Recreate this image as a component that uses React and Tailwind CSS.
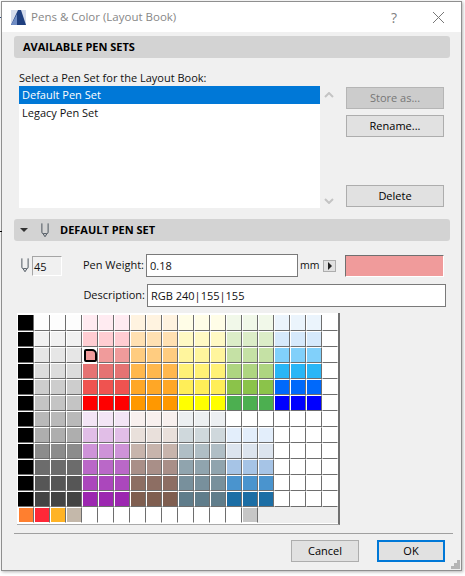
import React from 'react';

const ui = { fontFamily: '"Open Sans", "Noto Sans", sans-serif' };

// one colour per group: black, gray, pink, orange, yellow, green, blue, white
const groups = [
  ['#000000', '#fdfdfd', '#ffebf1', '#fff3e0', '#fffde7', '#f1f8e9', '#ebf4fc', '#ffffff'],
  ['#000000', '#f1f1f1', '#ffcdd2', '#ffe0b2', '#fff9c4', '#dcedc8', '#d6e9fb', '#ffffff'],
  ['#000000', '#e6e6e6', '#f09b9b', '#ffcc80', '#fff59d', '#c5e1a5', '#81d0fa', '#ffffff'],
  ['#000000', '#dcdcdc', '#e57373', '#ffb74d', '#fff176', '#aed581', '#29b6f6', '#ffffff'],
  ['#000000', '#cdcdcd', '#ef5350', '#ffa726', '#ffee58', '#8bc34a', '#0069fb', '#ffffff'],
  ['#000000', '#c4c4c4', '#ff0000', '#ff9800', '#ffff00', '#4caf50', '#0000ff', '#ffffff'],
  ['#000000', '#b9b9b9', '#f3e5f5', '#f8f0ee', '#eceff1', '#ffffff', '#ffffff', '#ffffff'],
  ['#000000', '#aeaeae', '#e1bee7', '#e9e0db', '#cfd8dc', '#e3eefb', '#ffffff', '#ffffff'],
  ['#000000', '#8c8c8c', '#ce93d8', '#c7b4ac', '#b0bec5', '#dce4ee', '#ffffff', '#ffffff'],
  ['#000000', '#6c6c6c', '#ba68c8', '#a98f88', '#90a4ae', '#a6c4e6', '#ffffff', '#ffffff'],
  ['#000000', '#565656', '#ab47bc', '#8d6e63', '#78909c', '#4a94ce', '#ffffff', '#ffffff'],
  ['#000000', '#444444', '#9c27b0', '#7f5e50', '#607d8b', '#1c6ea5', '#ffffff', '#ffffff'],
];
const spans = [1, 3, 3, 3, 3, 3, 3, 1];
const rows = groups.map(g => g.flatMap((c, i) => Array(spans[i]).fill(c)));
const lastRow = ['#ff7f2f', '#ff2837', '#ffb325', '#c4b8aa', ...Array(10).fill('#ffffff'), '#c6c6c6'];

const PenIcon = ({ className }) => (
  <svg viewBox="0 0 9 16" className={className} fill="none" stroke="#3c4650" strokeWidth="1">
    <path d="M1 0v10q0 1.5 1.5 1.5h4q1.5 0 1.5-1.5V0" />
    <path d="M2.5 12l2 3 2-3" />
  </svg>
);

const Btn = ({ children, className = '' }) => (
  <div className={`flex items-center justify-center w-[98px] h-[22px] border border-[#adadad] bg-[#e1e1e1] text-black text-[11px] ${className}`}>
    {children}
  </div>
);

const Bar = ({ children }) => (
  <div className="flex items-center h-[22px] ml-3 w-[436px] rounded-[3px] bg-[#d3d3d3] text-[11px] font-bold text-black">
    {children}
  </div>
);

const Cell = ({ color, selected, firstLine, lastLine, firstCol, lastCol }) => (
  <div className={`w-4 h-4 bg-white border border-l-white border-t-white ${firstLine ? 'border-t-0' : ''} ${firstCol ? 'border-l-0' : ''} ${lastCol ? 'border-r-white' : 'border-r-[#6e6e6e]'} ${lastLine ? 'border-b-white' : 'border-b-[#6e6e6e]'}`}>
    <div className="w-full h-full" style={{ background: selected ? '#ffffff' : color }}>
      {selected && <div className="ml-px mt-px w-[13px] h-[13px] border-2 border-black rounded-[2px] rounded-tr-[5px] bg-[#f09b9b]" />}
    </div>
  </div>
);

export default function App() {
  return (
    <div className="relative w-[465px] h-[576px] bg-white overflow-hidden text-[#111]" style={ui}>
      <div className="absolute left-0 top-[17px] w-px h-px bg-[#2a4a80]" />
      <div className="absolute left-0 top-[231px] w-[2px] h-px bg-black" />
      <div className="ml-px mt-px w-[461px] h-[570px] border border-[#8f8f8f] bg-[#f0f0f0] shadow-[1px_1px_3px_rgba(0,0,0,0.3)]">
        <div className="flex items-center h-[30px] bg-white">
          <svg viewBox="0 0 15 15" className="ml-[9px] w-[15px] h-[15px]">
            <rect width="15" height="15" fill="#d5dcec" />
            <path d="M0 15L7 0h3l5 15z" fill="#1f3f7f" />
            <path d="M0 15L6 4v11z" fill="#6f8cc4" />
          </svg>
          <span className="ml-[5px] text-[11.5px] text-[#878787]">Pens &amp; Color (Layout Book)</span>
          <span className="ml-auto text-[14px] text-[#808080]">?</span>
          <svg viewBox="0 0 11 11" className="ml-[36px] mr-[17px] w-[11px] h-[11px]" stroke="#777" fill="none">
            <path d="M0 0l11 11M11 0L0 11" />
          </svg>
        </div>

        <div className="pt-1">
          <Bar><span className="ml-[9px]">AVAILABLE PEN SETS</span></Bar>

          <div className="ml-[17px] mt-[11px] h-[17px] text-[11px] leading-[17px]">Select a Pen Set for the Layout Book:</div>
          <div className="flex ml-[17px]">
            <div className="w-[301px] h-[122px] bg-white text-[11px] leading-[18px]">
              <div className="h-[18px] pl-[3px] bg-[#0078d7] text-white">Default Pen Set</div>
              <div className="h-[18px] pl-[3px]">Legacy Pen Set</div>
            </div>
            <div className="flex flex-col justify-between w-[26px] h-[122px] pt-[6px] pb-[4px] pl-[4px]">
              <svg viewBox="0 0 10 6" className="w-[10px] h-[6px]" fill="none" stroke="#c4c4c4" strokeWidth="2"><path d="M1 5l4-4 4 4" /></svg>
              <svg viewBox="0 0 10 6" className="w-[10px] h-[6px]" fill="none" stroke="#c4c4c4" strokeWidth="2"><path d="M1 1l4 4 4-4" /></svg>
            </div>
            <div className="flex flex-col h-[122px] pt-px">
              <Btn className="!bg-[#cccccc] !border-[#b5b5b5] !text-[#777]">Store as...</Btn>
              <Btn className="mt-[6px]">Rename...</Btn>
              <Btn className="mt-[48px]">Delete</Btn>
            </div>
          </div>

          <div className="mt-[11px]">
            <Bar>
              <div className="ml-[6px] w-0 h-0 border-x-[4px] border-x-transparent border-t-[4px] border-t-[#333]" />
              <PenIcon className="ml-[13px] w-[8px] h-[15px]" />
              <span className="ml-[11px]">DEFAULT PEN SET</span>
            </Bar>
          </div>

          <div className="flex items-center ml-[19px] mt-[13px] h-[23px] text-[11px]">
            <PenIcon className="w-[8px] h-[15px]" />
            <div className="ml-[3px] w-[30px] h-[20px] pl-px leading-[20px] border border-[#a5a5a5] border-r-white border-b-white">45</div>
            <div className="w-[82px] text-right whitespace-nowrap">Pen Weight:</div>
            <div className="ml-[2px] w-[152px] h-[23px] pl-[3px] leading-[21px] border border-[#7a7a7a] bg-white">0.18</div>
            <span className="ml-[2px] w-[20px] text-[10.5px]">mm</span>
            <div className="ml-[3px] flex items-center justify-center w-[13px] h-[12px] border border-[#adadad] bg-[#e1e1e1]">
              <div className="w-0 h-0 border-y-[4px] border-y-transparent border-l-[4px] border-l-[#222]" />
            </div>
            <div className="ml-[9px] w-[99px] h-[22px] bg-[#f09b9b] border border-[#707070] border-r-white border-b-white" />
          </div>

          <div className="flex items-center ml-[19px] mt-[7px] h-[23px] text-[11px]">
            <div className="w-[124px] text-right">Description:</div>
            <div className="ml-[2px] w-[299px] h-[23px] pl-[3px] leading-[21px] border border-[#7a7a7a] bg-white">RGB 240|155|155</div>
          </div>

          <div className="ml-[15px] mt-[6px] w-[323px] h-[212px] pt-[2px] pl-px border-r-2 border-r-[#707070] border-b border-b-[#aaaaaa] bg-white">
            <div className="grid grid-cols-[repeat(20,16px)]">
              {rows.map((row, r) => row.map((c, i) => (
                <Cell key={`${r}-${i}`} color={c} selected={r === 2 && i === 4} firstLine={r === 0} firstCol={i === 0} lastCol={i === 19} />
              )))}
              {lastRow.map((c, i) => <Cell key={i} color={c} lastLine />)}
              <div className="col-span-5 h-4 bg-[#eeeeee]" />
            </div>
          </div>

          <div className="ml-3 mt-2 w-[439px] border-t border-[#a0a0a0]" />
          <div className="flex ml-[289px] mt-[6px]">
            <Btn className="!w-[68px]">Cancel</Btn>
            <Btn className="!w-[68px] ml-[18px] !border-2 !border-[#0078d7]">OK</Btn>
            <svg viewBox="0 0 9 9" className="ml-[6px] mt-[20px] w-[9px] h-[9px]" fill="#b5b5b5">
              <rect x="6" y="0" width="3" height="3" />
              <rect x="3" y="3" width="3" height="3" />
              <rect x="6" y="3" width="3" height="3" />
              <rect x="0" y="6" width="3" height="3" />
              <rect x="3" y="6" width="3" height="3" />
              <rect x="6" y="6" width="3" height="3" />
            </svg>
          </div>
        </div>
      </div>
    </div>
  );
}
